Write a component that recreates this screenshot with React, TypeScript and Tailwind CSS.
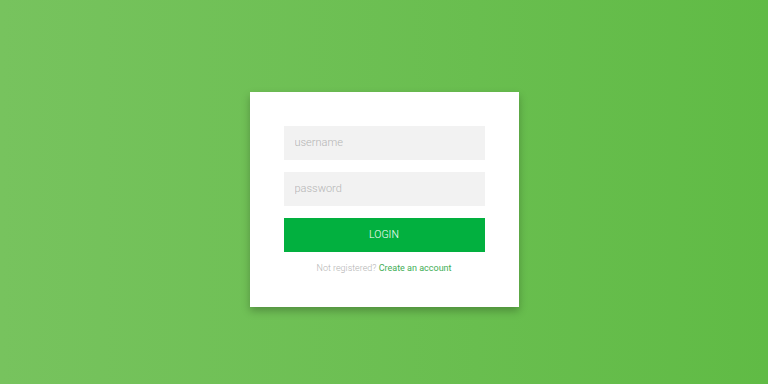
export default function App() {
  return (
    <div
      className="w-[768px] h-[384px] flex items-center justify-center bg-linear-to-r from-[#77c35e] to-[#60bb45]"
      style={{ fontFamily: "Roboto, sans-serif" }}
    >
      <div className="w-[269px] h-[215px] bg-white px-[34px] pt-[34px] shadow-[0_4px_8px_rgba(0,0,0,0.25)] mt-[14px]">
        <div className="flex flex-col gap-3">
          <input
            placeholder="username"
            className="h-[34px] w-full bg-[#f2f2f2] px-[11px] text-[11px] font-light text-[#333] placeholder:text-[#b5b5b5] outline-none"
          />
          <input
            placeholder="password"
            type="password"
            className="h-[34px] w-full bg-[#f2f2f2] px-[11px] text-[11px] font-light text-[#333] placeholder:text-[#b5b5b5] outline-none"
          />
          <button className="h-[34px] w-full bg-[#02b03f] text-[10.5px] font-light uppercase text-white">
            Login
          </button>
        </div>
        <p className="mt-[10px] text-center text-[9px] font-light text-[#b3b3b3]">
          Not registered? <a className="font-normal text-[#3fae56]">Create an account</a>
        </p>
      </div>
    </div>
  )
}
